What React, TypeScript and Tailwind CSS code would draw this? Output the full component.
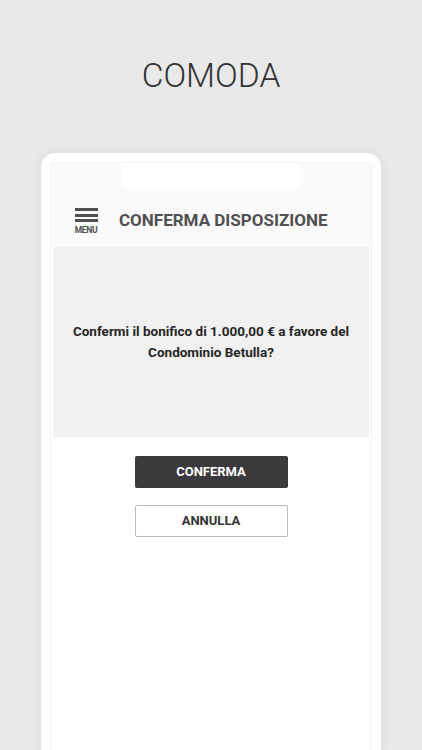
// Schermata "Comoda": conferma di un bonifico
import React from 'react';

function MenuButton() {
  return (
    <div className="flex flex-col items-center w-[24px]">
      <div className="flex flex-col gap-[2.5px] w-[23px]">
        <span className="block h-[3px] bg-[#505050]"></span>
        <span className="block h-[3px] bg-[#505050]"></span>
        <span className="block h-[3px] bg-[#505050]"></span>
      </div>
      <span className="mt-[4px] text-[8.5px] leading-[8px] font-bold text-[#505050] tracking-[-0.3px]">MENU</span>
    </div>
  );
}

export default function App() {
  return (
    <div
      className="w-full h-[750px] bg-[#e9e9e9] overflow-hidden flex flex-col items-center"
      style={{ fontFamily: 'Roboto, "Liberation Sans", sans-serif' }}
    >
      <h1 className="mt-[59px] text-[33.5px] leading-[34px] font-light text-[#333333]">COMODA</h1>

      {/* Cornice del telefono */}
      <div className="mt-[60px] w-[340px] flex-1 bg-white rounded-t-[14px] pt-[9px] px-[9px] shadow-[0_0_14px_rgba(0,0,0,0.07)] flex flex-col">
        <div className="relative flex-1 bg-white border-x border-t border-[#f3f3f3] rounded-t-[3px] flex flex-col">
          {/* Notch */}
          <div className="absolute top-0 left-1/2 -translate-x-1/2 w-[179px] h-[26px] bg-white rounded-b-[5px]"></div>

          <header className="h-[84px] bg-[#fafafa] flex items-start pt-[45px] pl-[23px]">
            <MenuButton />
            <span className="ml-[21px] mt-[2px] text-[17px] leading-[20px] font-bold text-[#505050]">
              CONFERMA DISPOSIZIONE
            </span>
          </header>

          <div className="mx-[2px] h-[190px] bg-[#f1f1f1] flex items-center justify-center">
            <p className="text-center text-[13.5px] leading-[21px] font-bold text-[#262626] whitespace-nowrap">
              Confermi il bonifico di 1.000,00 € a favore del
              <br />
              Condominio Betulla?
            </p>
          </div>

          <div className="flex flex-col items-center gap-[17px] mt-[19px]">
            <button className="w-[153px] h-[32px] bg-[#3a3a3c] text-white text-[13px] font-bold rounded-[2px]">
              CONFERMA
            </button>
            <button className="w-[153px] h-[32px] bg-white border border-[#b9b9c6] text-[#333333] text-[13px] font-bold rounded-[2px]">
              ANNULLA
            </button>
          </div>
        </div>
      </div>
    </div>
  );
}
